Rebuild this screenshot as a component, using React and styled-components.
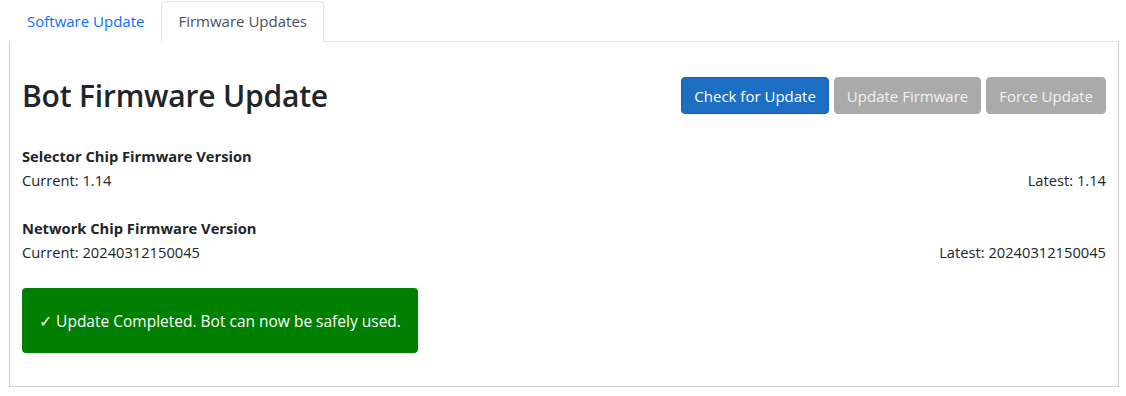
import React from "react";
import styled, { createGlobalStyle } from "styled-components";

const GlobalStyle = createGlobalStyle`
  body {
    margin: 0;
    background: #fff;
    font-family: "Open Sans", "Noto Sans", sans-serif;
    color: #212529;
  }
`;

const Page = styled.div`
  padding: 1px 7px 0 9px;
`;

const TabList = styled.ul`
  display: flex;
  list-style: none;
  margin: 0;
  padding: 0 0 0 1px;
  border-bottom: 1px solid #dee2e6;
`;

const Tab = styled.li`
  box-sizing: border-box;
  margin-bottom: -1px;
  padding: 0 16px 2px;
  height: 41px;
  display: flex;
  align-items: center;
  font-size: 15px;
  color: ${(p) => (p.active ? "#495057" : "#0d6efd")};
  background: #fff;
  border: 1px solid ${(p) => (p.active ? "#dee2e6" : "transparent")};
  border-bottom-color: ${(p) => (p.active ? "#fff" : "transparent")};
  border-radius: 4px 4px 0 0;
  cursor: pointer;
`;

const Panel = styled.div`
  border: 1px solid #ccc;
  border-top: none;
  padding: 33px 12px 33px 12px;
`;

const Header = styled.div`
  display: flex;
  align-items: center;
  justify-content: space-between;
  margin-bottom: 28px;
`;

const Title = styled.h1`
  margin: 0;
  font-size: 30px;
  font-weight: 600;
  letter-spacing: -0.2px;
`;

const ButtonGroup = styled.div`
  display: flex;
  gap: 5px;
`;

const Button = styled.button`
  height: 37px;
  padding: 0 12px;
  border: 1px solid ${(p) => (p.primary ? "#1861ac" : "#aaa")};
  border-radius: 4px;
  background: ${(p) => (p.primary ? "#1b6ec2" : "#aaa")};
  color: ${(p) => (p.primary ? "#fff" : "#f2f2f2")};
  font-family: inherit;
  font-size: 15px;
`;

const Section = styled.div`
  margin-bottom: 24px;
  font-size: 14.7px;
  line-height: 24px;
`;

const Label = styled.div`
  font-weight: 700;
`;

const VersionRow = styled.div`
  display: flex;
  justify-content: space-between;
`;

const Alert = styled.div`
  width: 396px;
  box-sizing: border-box;
  height: 65px;
  margin-top: 14px;
  display: flex;
  align-items: center;
  justify-content: center;
  background: #008000;
  color: #fff;
  border-radius: 4px;
  font-size: 15.5px;
`;

const chips = [
  { name: "Selector Chip Firmware Version", current: "1.14", latest: "1.14" },
  {
    name: "Network Chip Firmware Version",
    current: "20240312150045",
    latest: "20240312150045",
  },
];

export default function App() {
  return (
    <>
      <GlobalStyle />
      <Page>
        <TabList>
          <Tab>Software Update</Tab>
          <Tab active>Firmware Updates</Tab>
        </TabList>
        <Panel>
          <Header>
            <Title>Bot Firmware Update</Title>
            <ButtonGroup>
              <Button primary>Check for Update</Button>
              <Button>Update Firmware</Button>
              <Button>Force Update</Button>
            </ButtonGroup>
          </Header>
          {chips.map((c) => (
            <Section key={c.name}>
              <Label>{c.name}</Label>
              <VersionRow>
                <span>Current: {c.current}</span>
                <span>Latest: {c.latest}</span>
              </VersionRow>
            </Section>
          ))}
          <Alert>✓ Update Completed. Bot can now be safely used.</Alert>
        </Panel>
      </Page>
    </>
  );
}
